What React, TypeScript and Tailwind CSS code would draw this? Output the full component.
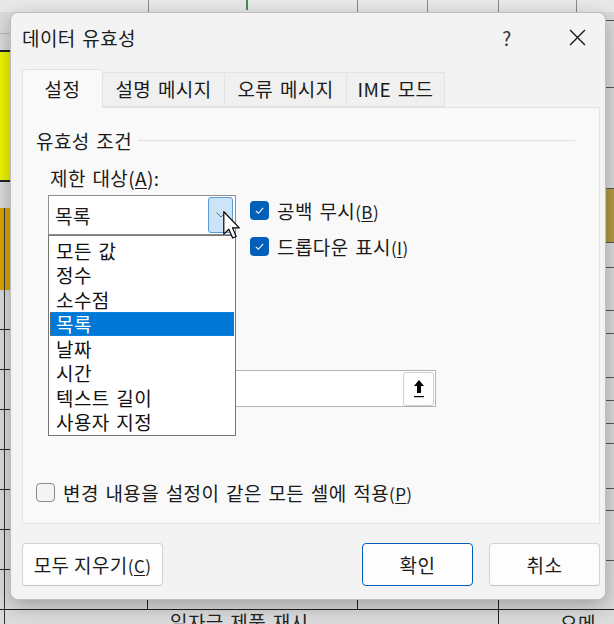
import React from 'react';

const FONT = { fontFamily: '"Noto Sans CJK KR", "Noto Sans", sans-serif' };

const items = ['모든 값', '정수', '소수점', '목록', '날짜', '시간', '텍스트 길이', '사용자 지정'];

function Check() {
  return (
    <svg viewBox="0 0 12 12" className="w-[11px] h-[11px]">
      <path d="M2 6.3 L4.8 9 L10 3.2" fill="none" stroke="#fff" strokeWidth="1.2" />
    </svg>
  );
}

function CheckRow({ label, hot, checked }: { label: string; hot: string; checked?: boolean }) {
  return (
    <div className="flex items-center gap-[8px] h-[19px]">
      {checked ? (
        <span className="w-[19px] h-[19px] rounded-[4px] bg-[#005fb8] flex items-center justify-center">
          <Check />
        </span>
      ) : (
        <span className="w-[19px] h-[19px] rounded-[4px] border border-[#8b8b8b] bg-[#f4f4f4]" />
      )}
      <span className="text-[19px] leading-none text-[#1b1b1b]">
        {label}
        <span className="text-[17px]">
          (<span className="underline underline-offset-2">{hot}</span>)
        </span>
      </span>
    </div>
  );
}

function Backdrop() {
  return (
    <>
      {/* top strip */}
      <div className="absolute left-0 top-0 w-[614px] h-[12px] bg-[#e9e9e9]" />
      {[148, 357, 427, 498, 576].map((x) => (
        <div key={x} className="absolute top-0 h-[12px] w-px bg-[#8a8a8a]" style={{ left: x }} />
      ))}
      <div className="absolute top-0 left-[246px] h-[10px] w-[2px] bg-[#4a8a5a]" />
      {/* left strip */}
      <div className="absolute left-0 top-[33px] w-[10px] h-px bg-[#b8b8b8]" />
      <div className="absolute left-0 top-[50px] w-[10px] h-[132px] bg-[#eef700] border-y-2 border-[#222]" />
      <div className="absolute left-0 top-[208px] w-[10px] h-[82px] bg-[#d9a800]" />
      <div className="absolute left-[4px] top-[208px] w-px h-[416px] bg-[#333]" />
      {[329, 369, 409, 449, 489, 529, 569].map((y) => (
        <div key={y} className="absolute left-0 w-[10px] h-px bg-[#222]" style={{ top: y }} />
      ))}
      {/* right strip */}
      <div className="absolute left-[606px] top-[188px] w-[8px] h-[54px] bg-[#b39a45]" />
      {[20, 87, 188, 242, 267, 310, 333, 377, 400, 423, 443, 488, 510, 560].map((y) => (
        <div key={y} className="absolute left-[606px] w-[8px] h-px bg-[#555]" style={{ top: y }} />
      ))}
      {/* bottom strip */}
      <div className="absolute left-0 top-[609px] w-[614px] h-px bg-[#1e1e1e]" />
      {[147, 357, 498].map((x) => (
        <div key={x} className="absolute top-[598px] h-[12px] w-px bg-[#1e1e1e]" style={{ left: x }} />
      ))}
      <div className="absolute left-[498px] top-[609px] h-[15px] w-px bg-[#1e1e1e]" />
      <div className="absolute left-[170px] top-[612px] text-[19px] leading-none text-[#222]">일자금 제품 재시</div>
      <div className="absolute left-[560px] top-[613px] text-[19px] leading-none text-[#222]">오메</div>
    </>
  );
}

export default function App() {
  return (
    <div
      className="relative w-[614px] h-[624px] overflow-hidden bg-[#dcdcdc] tracking-[0.4px] [word-spacing:2px]"
      style={FONT}
    >
      <Backdrop />

      {/* dialog window */}
      <div className="absolute left-[10px] top-[12px] w-[596px] h-[588px] rounded-[8px] bg-[#f3f3f3] border border-[#bdbdbd] shadow-[0_6px_20px_rgba(0,0,0,0.28)] flex flex-col pl-[11px] pr-[5px] text-[#1b1b1b]">
        {/* title bar */}
        <div className="h-[57px] flex items-center">
          <span className="text-[19px] leading-none -mt-[9px]">데이터 유효성</span>
          <span className="ml-auto w-[30px] text-center text-[19px] leading-none -mt-[9px] text-[#333]">?</span>
          <span className="ml-[40px] mr-[8px] w-[30px] flex justify-center -mt-[9px]">
            <svg viewBox="0 0 16 16" className="w-[17px] h-[17px]">
              <path d="M1 1 L15 15 M15 1 L1 15" stroke="#1b1b1b" strokeWidth="1.3" />
            </svg>
          </span>
        </div>

        {/* tabs */}
        <div className="h-[38px] flex items-end relative z-10 -mb-px">
          <div className="h-[39px] w-[81px] bg-[#f9f9f9] border border-b-0 border-[#e3e3e3] rounded-t-[3px] flex items-center justify-center text-[19px]">
            설정
          </div>
          {[
            ['설명 메시지', 'w-[122px]'],
            ['오류 메시지', 'w-[122px]'],
            ['IME 모드', 'w-[98px]'],
          ].map(([t, w]) => (
            <div
              key={t}
              className={`${w} h-[35px] mb-px bg-[#f0f0f0] border border-l-0 border-[#e3e3e3] flex items-center justify-center text-[19px]`}
            >
              {t}
            </div>
          ))}
        </div>

        {/* panel */}
        <div className="relative h-[417px] bg-[#f9f9f9] border border-[#e3e3e3] flex flex-col px-[13px]">
          <div className="mt-[20px] h-[24px] flex items-center gap-[6px] pr-[11px]">
            <span className="text-[19px] leading-none">유효성 조건</span>
            <span className="flex-1 h-px bg-[#e0e0e0]" />
          </div>

          <div className="pl-[14px] flex flex-col">
            <div className="mt-[13px] h-[24px] flex items-center text-[19px] leading-none">
              제한 대상(<span className="underline underline-offset-2">A</span>):
            </div>

            <div className="mt-[6px] flex -ml-[2px]">
              <div className="w-[188px] h-[40px] bg-white border border-[#8e8e8e] flex items-center pl-[6px] pr-[2px]">
                <span className="text-[19px] leading-none">목록</span>
                <span className="ml-auto w-[25px] h-[36px] rounded-[3px] bg-[#cce4f7] border border-[#5a9bd8] flex items-center justify-center">
                  <svg viewBox="0 0 10 6" className="w-[10px] h-[6px]">
                    <path d="M0.5 0.5 L5 5 L9.5 0.5" fill="none" stroke="#6a6a6a" strokeWidth="1" />
                  </svg>
                </span>
              </div>
              <div className="ml-[14px] mt-[6px] flex flex-col gap-[17px]">
                <CheckRow label="공백 무시" hot="B" checked />
                <CheckRow label="드롭다운 표시" hot="I" checked />
              </div>
            </div>

            {/* source field (its label sits under the open list) */}
            <div className="mt-[114px] -ml-[2px] w-[388px] h-[37px] bg-white border border-[#b4b4b4] flex items-center justify-end pr-[1px]">
              <span className="w-[31px] h-[34px] rounded-[3px] border border-[#cfcfcf] bg-[#fdfdfd] flex items-center justify-center">
                <svg viewBox="0 0 12 20" className="w-[12px] h-[20px]">
                  <path d="M6 1 L11 7 L8 7 L8 14 L4 14 L4 7 L1 7 Z" fill="#000" />
                  <rect x="1" y="17" width="10" height="1.2" fill="#000" />
                </svg>
              </span>
            </div>
          </div>

          <div className="mt-auto mb-[21px]">
            <CheckRow label="변경 내용을 설정이 같은 모든 셀에 적용" hot="P" />
          </div>

          {/* open drop-down list */}
          <div className="absolute left-[25px] top-[127px] w-[188px] h-[201px] bg-white border border-[#767676] flex flex-col pt-[2px] px-[1px] z-20">
            {items.map((it) => (
              <div
                key={it}
                className={
                  it === '목록'
                    ? 'h-[24.5px] flex items-center pl-[5px] text-[19px] leading-none bg-[#0078d7] text-white border border-dotted border-[#8a6d4a]'
                    : 'h-[24.5px] flex items-center pl-[6px] text-[19px] leading-none text-[#111]'
                }
              >
                {it}
              </div>
            ))}
          </div>

          {/* mouse pointer */}
          <svg viewBox="0 0 13 20" className="absolute left-[200px] top-[103px] w-[19px] h-[29px] z-30">
            <path d="M0.5 0.5 L0.5 16 L4 12.6 L6.6 18.6 L9 17.6 L6.5 11.6 L11.2 11.6 Z" fill="#fff" stroke="#000" strokeWidth="0.8" strokeLinejoin="round" />
          </svg>
        </div>

        {/* footer buttons */}
        <div className="mt-[19px] h-[43px] flex">
          <button className="w-[141px] h-[43px] rounded-[4px] bg-[#fdfdfd] border border-[#d2d2d2] border-b-[#c2c2c2] text-[19px] leading-none">
            모두 지우기<span className="text-[17px]">(<span className="underline underline-offset-2">C</span>)</span>
          </button>
          <button className="ml-auto w-[111px] h-[43px] rounded-[4px] bg-[#fdfdfd] border border-[#005fb8] text-[19px] leading-none">
            확인
          </button>
          <button className="ml-[16px] w-[111px] h-[43px] rounded-[4px] bg-[#fdfdfd] border border-[#d2d2d2] border-b-[#c2c2c2] text-[19px] leading-none">
            취소
          </button>
        </div>
      </div>
    </div>
  );
}
